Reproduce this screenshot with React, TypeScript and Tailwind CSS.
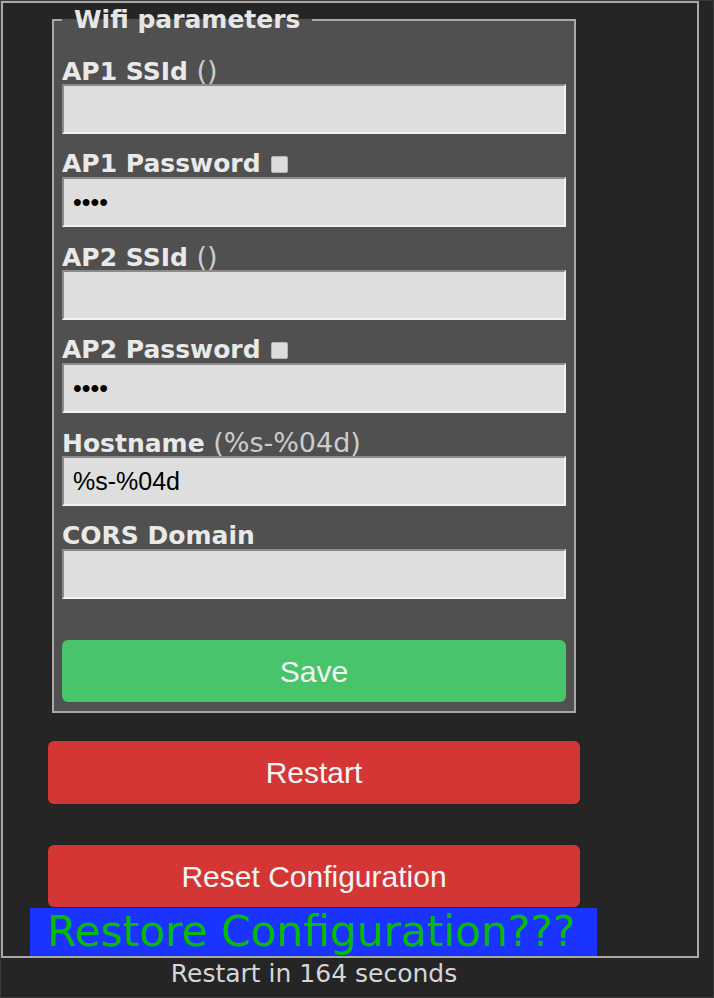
import React from "react";

type Field = {
  id: string;
  label: string;
  hint?: string;
  secret?: boolean;
  value: string;
};

const fields: Field[] = [
  { id: "ap1ssid", label: "AP1 SSId", hint: "()", value: "" },
  { id: "ap1pass", label: "AP1 Password", secret: true, value: "abcd" },
  { id: "ap2ssid", label: "AP2 SSId", hint: "()", value: "" },
  { id: "ap2pass", label: "AP2 Password", secret: true, value: "abcd" },
  { id: "hostname", label: "Hostname", hint: "(%s-%04d)", value: "%s-%04d" },
  { id: "cors", label: "CORS Domain", value: "" },
];

const sans = "font-['DejaVu_Sans',sans-serif]";
const arial = "font-['Liberation_Sans',Arial,sans-serif]";

const input =
  "block h-[50px] w-[504px] border-2 border-t-[#8a8a8a] border-l-[#8a8a8a] border-r-[#f2f2f2] border-b-[#f2f2f2] bg-[#dedede] px-[9px] text-[25px] text-black outline-none " +
  arial;

export default function App() {
  return (
    <div className="h-[998px] w-[714px] overflow-hidden border border-[#3a3a3a] bg-[#252525]">
      <div className="w-[698px] border-2 border-[#a8a8a8]">
        <fieldset className="ml-[49px] w-[524px] border-2 border-[#a9a9a9] bg-[#505050] px-[8px] pb-[9px] pt-[17px]">
          <legend className={`px-[12px] text-[25px] font-bold leading-[34px] text-[#e6e6e6] ${sans}`}>
            Wifi parameters
          </legend>

          {fields.map((f) => (
            <div key={f.id} className="mb-[13px]">
              <label
                htmlFor={f.id}
                className={`flex h-[30px] items-center gap-[10px] pt-[4px] text-[25px] leading-[26px] text-[#e9e9e9] ${sans}`}
              >
                <span>
                  <span className="font-bold">{f.label}</span>
                  {f.hint && <span className="text-[27px] text-[#cccccc]"> {f.hint}</span>}
                </span>
                {f.secret && (
                  <input
                    type="checkbox"
                    className="h-[17px] w-[17px] appearance-none rounded-[2px] border border-[#b5b5b5] bg-[#dcdcdc]"
                  />
                )}
              </label>
              <input
                id={f.id}
                type={f.secret ? "password" : "text"}
                defaultValue={f.value}
                className={input}
              />
            </div>
          ))}

          <button
            className={`mt-[41px] block h-[62px] w-[504px] rounded-[6px] bg-[#48c46a] text-[30px] text-[#f4f4f4] ${arial}`}
          >
            Save
          </button>
        </fieldset>

        <button
          className={`ml-[45px] mt-[28px] block h-[63px] w-[532px] rounded-[6px] bg-[#d43636] text-[30px] text-[#f4f4f4] ${arial}`}
        >
          Restart
        </button>
        <button
          className={`ml-[45px] mt-[41px] block h-[62px] w-[532px] rounded-[6px] bg-[#d43636] text-[30px] text-[#f4f4f4] ${arial}`}
        >
          Reset Configuration
        </button>
        <div
          className={`ml-[27px] mt-[1px] h-[48px] w-[567px] bg-[#1a33ff] pl-[17px] text-[42.3px] leading-[48px] text-[#06bb06] ${sans}`}
        >
          Restore Configuration???
        </div>
      </div>

      <div className={`w-[626px] text-center text-[25px] leading-[32px] text-[#d6d6d6] ${sans}`}>
        Restart in 164 seconds
      </div>
    </div>
  );
}
